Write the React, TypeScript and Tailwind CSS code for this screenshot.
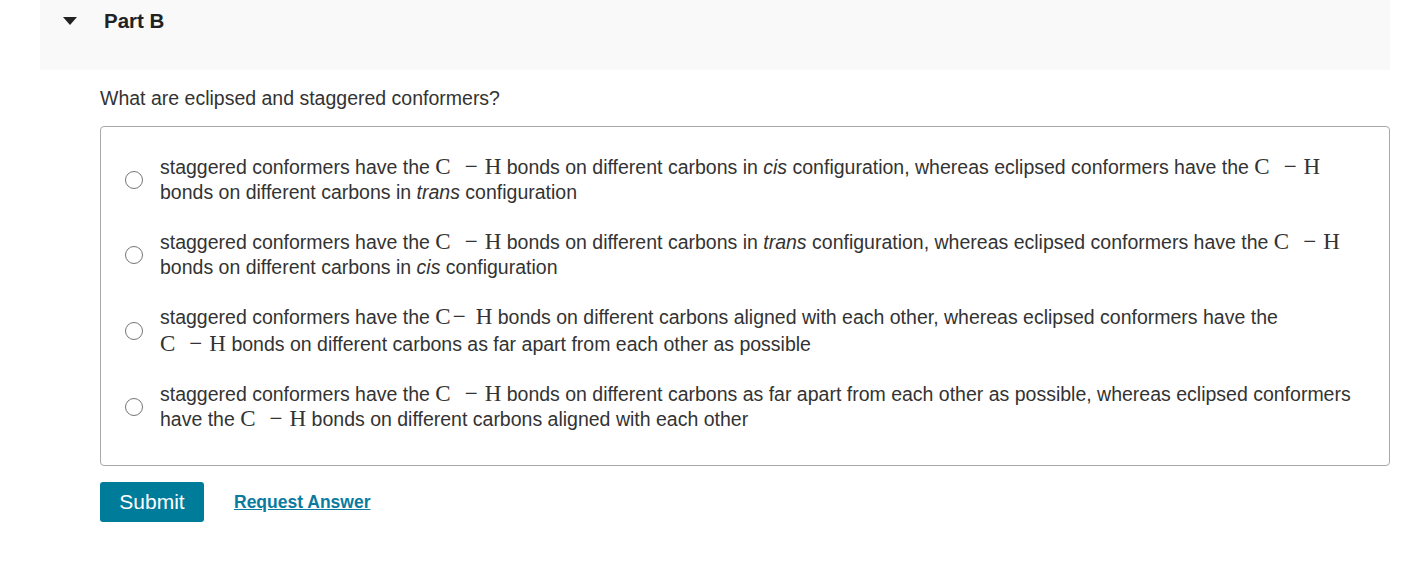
import React from 'react';

const Chem = ({ tight = false }: { tight?: boolean }) => (
  <span className="whitespace-nowrap font-['Liberation_Serif',serif] text-[23px] leading-none">
    C<span className={tight ? 'ml-[2px] mr-[10px]' : 'ml-[14px] mr-[7px]'}>−</span>H
  </span>
);

const Radio = () => (
  <span className="block h-[18px] w-[18px] shrink-0 rounded-full border border-[#767676] bg-white" />
);

const Option = ({ children }: { children: React.ReactNode }) => (
  <label className="flex items-center gap-[17px] cursor-pointer">
    <Radio />
    <span className="block w-[1198px] text-[19.5px] leading-[25px] text-[#333]">{children}</span>
  </label>
);

export default function App() {
  return (
    <div className="min-h-screen bg-white font-['Liberation_Sans',Arial,sans-serif]">
      <div className="ml-[40px] w-[1350px]">
        <div className="flex h-[70px] items-start bg-[#f9f9f9] pt-[8px]">
          <svg className="ml-[23px] mt-[9px]" width="14" height="8" viewBox="0 0 14 8">
            <path d="M0 0 L14 0 L7 8 Z" fill="#222" />
          </svg>
          <span className="ml-[27px] text-[20.5px] font-bold leading-[25px] text-[#222]">Part B</span>
        </div>

        <div className="pl-[60px]">
          <p className="mt-[16px] text-[19.5px] leading-[25px] text-[#333]">
            What are eclipsed and staggered conformers?
          </p>

          <div className="mt-[15px] flex flex-col gap-[25px] rounded-[4px] border border-[#a8a8a8] pb-[33px] pl-[24px] pr-[30px] pt-[28px]">
            <Option>
              staggered conformers have the <Chem /> bonds on different carbons in <i>cis</i> configuration,
              whereas eclipsed conformers have the <Chem /> bonds on different carbons in <i>trans</i> configuration
            </Option>
            <Option>
              staggered conformers have the <Chem /> bonds on different carbons in <i>trans</i> configuration,
              whereas eclipsed conformers have the <Chem /> bonds on different carbons in <i>cis</i> configuration
            </Option>
            <Option>
              staggered conformers have the <Chem tight /> bonds on different carbons aligned with each other,
              whereas eclipsed conformers have the
              <br />
              <span className="inline-block pt-[2px]">
                <Chem />
              </span>{' '}
              bonds on different carbons as far apart from each other as possible
            </Option>
            <Option>
              staggered conformers have the <Chem /> bonds on different carbons as far apart from each other as
              possible, whereas eclipsed conformers have the <Chem /> bonds on different carbons aligned with each
              other
            </Option>
          </div>

          <div className="mt-[16px] flex items-center gap-[30px]">
            <button className="h-[40px] w-[104px] rounded-[3px] bg-[#007c9b] text-[21px] text-white">
              Submit
            </button>
            <a href="#" className="text-[17.5px] font-bold text-[#0a7ba0] underline">
              Request Answer
            </a>
          </div>
        </div>
      </div>
    </div>
  );
}
